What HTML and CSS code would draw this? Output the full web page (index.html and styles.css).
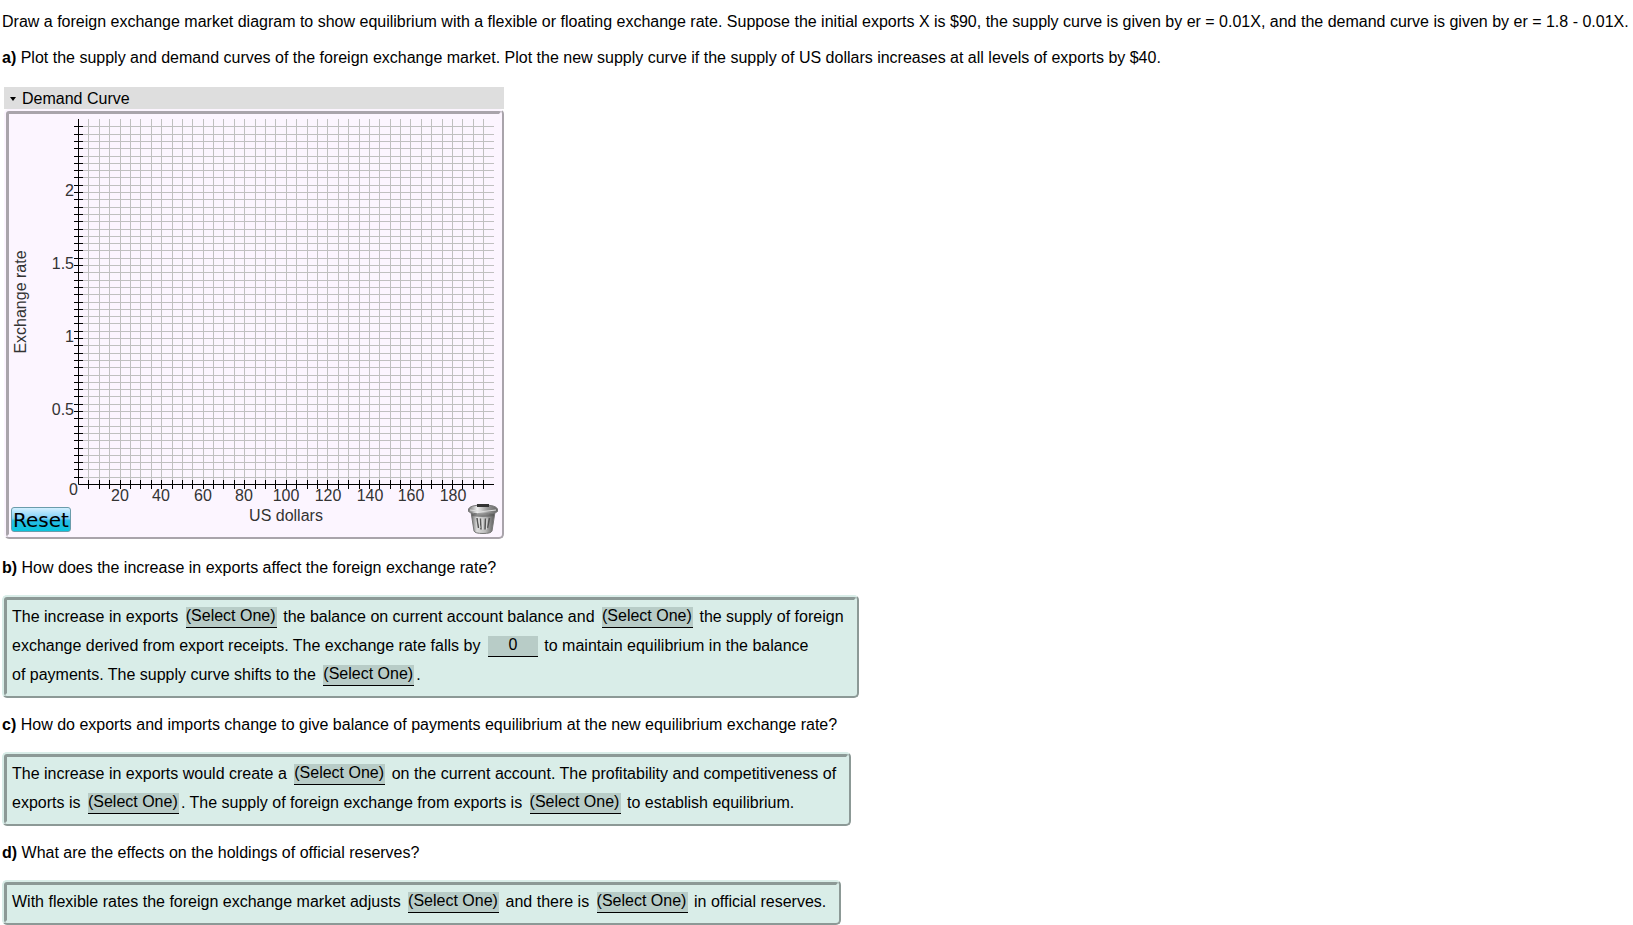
FILE: index.html
```html
<!DOCTYPE html>
<html lang="en">
<head>
<meta charset="utf-8">
<title>Foreign exchange market</title>
<link rel="stylesheet" href="styles.css">
</head>
<body>
<main class="page">
  <p class="prompt">Draw a foreign exchange market diagram to show equilibrium with a flexible or floating exchange rate. Suppose the initial exports X is $90, the supply curve is given by er = 0.01X, and the demand curve is given by er = 1.8 - 0.01X.</p>
  <p class="prompt"><b>a)</b> Plot the supply and demand curves of the foreign exchange market. Plot the new supply curve if the supply of US dollars increases at all levels of exports by $40.</p>

  <details class="plot" open>
    <summary class="plot-title"><svg class="caret" viewBox="0 0 6 4" aria-hidden="true"><path d="M0 0H6L3 4Z"/></svg>Demand Curve</summary>
    <div class="plot-panel">
      <svg class="graph" viewBox="0 0 490 420" role="img" aria-label="Exchange rate against US dollars">
        <path id="grid" class="grid"/>
        <path id="axes" class="axes"/>
        <g class="labels end">
          <text x="65" y="82">2</text>
          <text x="65" y="155">1.5</text>
          <text x="65" y="228">1</text>
          <text x="65" y="301">0.5</text>
          <text x="69" y="381">0</text>
        </g>
        <g class="labels middle">
          <text x="111" y="387">20</text>
          <text x="152" y="387">40</text>
          <text x="194" y="387">60</text>
          <text x="235" y="387">80</text>
          <text x="277" y="387">100</text>
          <text x="319" y="387">120</text>
          <text x="361" y="387">140</text>
          <text x="402" y="387">160</text>
          <text x="444" y="387">180</text>
          <text x="277" y="407">US dollars</text>
          <text transform="translate(17 188) rotate(-90)">Exchange rate</text>
        </g>
      </svg>
      <button class="reset" type="button">Reset</button>
      <button class="trash" type="button" aria-label="Delete">
        <svg viewBox="0 0 30 31" aria-hidden="true">
          <defs>
            <linearGradient id="metal"><stop offset="0" stop-color="#666"/><stop offset=".25" stop-color="#ddd"/><stop offset=".6" stop-color="#bbb"/><stop offset="1" stop-color="#555"/></linearGradient>
            <linearGradient id="lid"><stop offset="0" stop-color="#777"/><stop offset=".3" stop-color="#eee"/><stop offset=".65" stop-color="#999"/><stop offset="1" stop-color="#666"/></linearGradient>
          </defs>
          <path d="M3 9L6 28Q7 30.500 15 30.500T24 28L27 9Z" fill="url(#metal)" stroke="#777"/>
          <path d="M3.500 10Q15 13 26.500 10L26 13Q15 15 4 13Z" fill="#555" opacity=".6"/>
          <path d="M9 15L10.500 25M12.500 15.500L13 26.500M17.500 15.500L17 26.500M21.500 15L19.500 25" stroke="#555" stroke-width="1.500" fill="none"/>
          <path d="M10.500 15L12 25M14 15.500L14.500 26.500M19 15.500L18.500 26.500" stroke="#ddd" fill="none"/>
          <path d="M.5 6Q2 2 15 2T29.500 6V8.500Q27 11 15 11T.5 8.500Z" fill="url(#lid)" stroke="#777"/>
          <path d="M2 7Q15 10 28 7" stroke="#ddd" fill="none"/>
          <path d="M9 1H21V4H9Z" fill="#333"/>
        </svg>
      </button>
    </div>
  </details>

  <p class="prompt"><b>b)</b> How does the increase in exports affect the foreign exchange rate?</p>
  <div class="answer">The increase in exports <select class="blank" aria-label="Effect on balance"><option>(Select One)</option></select> the balance on current account balance and <select class="blank" aria-label="Effect on supply"><option>(Select One)</option></select> the supply of foreign<br>exchange derived from export receipts. The exchange rate falls by <input class="blank number" type="text" value="0" aria-label="Exchange rate fall"> to maintain equilibrium in the balance<br>of payments. The supply curve shifts to the <select class="blank" aria-label="Shift direction"><option>(Select One)</option></select>.</div>

  <p class="prompt"><b>c)</b> How do exports and imports change to give balance of payments equilibrium at the new equilibrium exchange rate?</p>
  <div class="answer">The increase in exports would create a <select class="blank" aria-label="Current account result"><option>(Select One)</option></select> on the current account. The profitability and competitiveness of<br>exports is <select class="blank" aria-label="Profitability change"><option>(Select One)</option></select>. The supply of foreign exchange from exports is <select class="blank" aria-label="Supply change"><option>(Select One)</option></select> to establish equilibrium.</div>

  <p class="prompt"><b>d)</b> What are the effects on the holdings of official reserves?</p>
  <div class="answer">With flexible rates the foreign exchange market adjusts <select class="blank" aria-label="Market adjustment"><option>(Select One)</option></select> and there is <select class="blank" aria-label="Reserve change"><option>(Select One)</option></select> in official reserves.</div>
</main>
<script src="graph.js"></script>
</body>
</html>
```
FILE: styles.css
```css
* { box-sizing: border-box; }

body {
  margin: 0;
  background: #fff;
  color: #000;
  font: 16px/18px "Liberation Sans", Arial, sans-serif;
}

.page { padding: 13px 2px 0; }

.prompt { margin: 0 0 18px; }

.plot {
  width: 500px;
  max-width: 100%;
  margin: 20px 2px;
}

.plot-title {
  display: flex;
  align-items: center;
  gap: 6px;
  height: 22px;
  padding: 2px 0 0 6px;
  background: #dedede;
  cursor: pointer;
}

.caret { width: 6px; height: 4px; }

.plot-panel,
.answer {
  border: 5px ridge;
  border-radius: 5px;
}

.plot-panel {
  display: grid;
  border-color: #fcf5ff;
  background: #fcf5ff;
}

.graph, .reset, .trash { grid-area: 1 / 1; }

.graph { display: block; width: 100%; }

.grid { fill: none; stroke: #c0c0c0; }
.axes { fill: none; stroke: #000; }
.labels { fill: #333; font-size: 16px; }
.end { text-anchor: end; }
.middle { text-anchor: middle; }

.reset {
  place-self: end start;
  margin: 0 0 2px 2px;
  width: 60px;
  height: 25px;
  padding: 0;
  border: 1px solid #6a9cab;
  border-radius: 3px;
  background: linear-gradient(#d2efff, #7fd0f7 45%, #27bce6 55%, #0bc4dc);
  color: #000;
  font: 20px/22px "DejaVu Sans", sans-serif;
}

.trash {
  place-self: end;
  width: 30px;
  height: 31px;
  margin: 0 1px 0 0;
  padding: 0;
  border: 0;
  background: none;
}

.trash svg { display: block; width: 100%; }

.answer {
  width: fit-content;
  margin-bottom: 18px;
  padding: 2px 10px 4px 5px;
  border-color: #d9ede8;
  background: #d9ede8;
  line-height: 29px;
}

.blank {
  appearance: none;
  width: 91px;
  height: 21px;
  margin: 0 2px 0 3px;
  padding: 0 0 3px;
  border: 0;
  border-bottom: 1px solid #000;
  border-radius: 0;
  background: #b8ccc7;
  color: #000;
  font: 16px/17px "Liberation Sans", Arial, sans-serif;
  vertical-align: middle;
}

.number { width: 50px; text-align: center; }
```
FILE: graph.js
```js
// Plot area edges in the graph's own units.
const plot = { left: 69, right: 485, top: 5, bottom: 370 };
let grid = "";
let axes = `M${plot.left}.5 ${plot.top}V${plot.bottom}.5H${plot.right}`;

for (let i = 1; i < 40; i++) {
  const x = Math.round(plot.left + i * 10.39) + 0.5;
  grid += `M${x} ${plot.top}V${plot.bottom}`;
  axes += `M${x} 366V375`;
}
for (let i = 1; i < 50; i++) {
  const y = Math.round(plot.bottom - i * 7.3) + 0.5;
  grid += `M${plot.left} ${y}H${plot.right}`;
  axes += `M65 ${y}H74`;
}
document.getElementById("grid").setAttribute("d", grid);
document.getElementById("axes").setAttribute("d", axes);
```
